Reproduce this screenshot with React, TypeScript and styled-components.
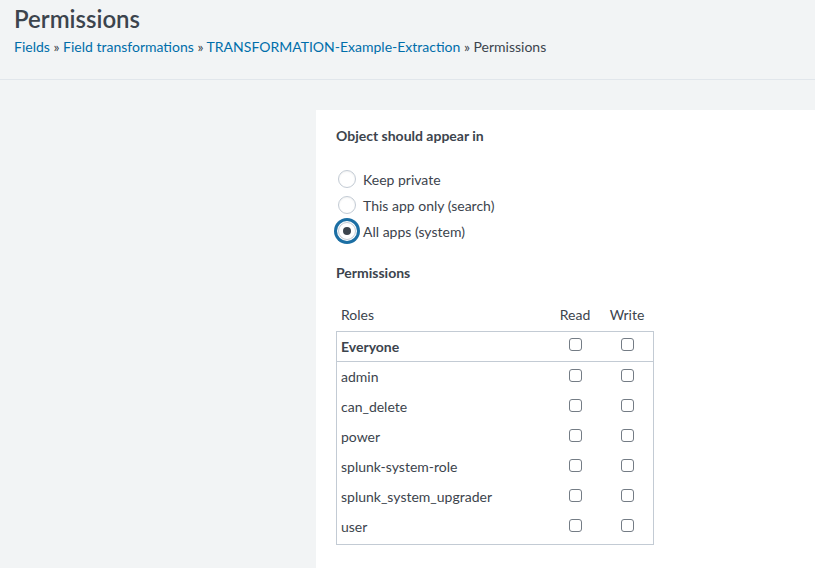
import React from 'react';
import styled, { createGlobalStyle } from 'styled-components';

const GlobalStyle = createGlobalStyle`
  html, body {
    margin: 0;
    padding: 0;
    background: #f2f4f5;
    font-family: Lato, 'Open Sans', sans-serif;
    color: #3c444d;
  }
`;

const Page = styled.div`
  min-height: 568px;
  display: flex;
  flex-direction: column;
`;

const PageHeader = styled.header`
  height: 80px;
  box-sizing: border-box;
  padding: 3px 14px 0;
  border-bottom: 1px solid #e1e6eb;
`;

const Title = styled.h1`
  margin: 0;
  font-size: 24px;
  font-weight: 600;
  line-height: 32px;
  color: #3c444d;
`;

const Crumbs = styled.div`
  font-size: 14px;
  line-height: 20px;
  margin-top: 2px;
  color: #3c444d;
`;

const CrumbLink = styled.a`
  color: #006eaa;
  text-decoration: none;
`;

const Body = styled.main`
  flex: 1;
  display: grid;
  grid-template-columns: 316px 1fr;
  padding-top: 30px;
`;

const Panel = styled.section`
  grid-column: 2;
  background: #fff;
  padding: 16px 20px 20px;
`;

const SectionTitle = styled.h2`
  margin: 0;
  font-size: 14px;
  font-weight: 700;
  line-height: 20px;
`;

const RadioList = styled.div`
  display: flex;
  flex-direction: column;
  gap: 6px;
  margin: 23px 0 22px;
`;

const RadioRow = styled.label`
  display: flex;
  align-items: center;
  gap: 7px;
  font-size: 14px;
  height: 20px;
  padding-left: 2px;
`;

const RadioCircle = styled.span<{ $checked?: boolean }>`
  width: 18px;
  height: 18px;
  box-sizing: border-box;
  border-radius: 50%;
  border: 1px solid #c3cbd4;
  background: #fff;
  display: flex;
  align-items: center;
  justify-content: center;
  box-shadow: ${(p) => (p.$checked ? '0 0 0 1px #fff, 0 0 0 4px #1b6ea3' : 'inset 0 1px 2px rgba(0,0,0,0.06)')};

  &::after {
    content: '';
    display: ${(p) => (p.$checked ? 'block' : 'none')};
    width: 8px;
    height: 8px;
    border-radius: 50%;
    background: #3c444d;
  }
`;

const Table = styled.div`
  width: 318px;
  margin-top: 16px;
`;

const Grid = styled.div`
  display: grid;
  grid-template-columns: 1fr 52px 52px;
  align-items: center;
  box-sizing: border-box;
`;

const HeadRow = styled(Grid)`
  height: 32px;
  padding: 0 1px 1px 5px;
  font-size: 14px;
`;

const HeadCell = styled.span<{ $center?: boolean }>`
  text-align: ${(p) => (p.$center ? 'center' : 'left')};
`;

const Box = styled.div`
  border: 1px solid #c3cbd4;
  padding-bottom: 2px;
`;

const RoleRow = styled(Grid)<{ $first?: boolean }>`
  height: 30px;
  padding: 0 0 1px 4px;
  font-size: 14px;
  font-weight: ${(p) => (p.$first ? 700 : 400)};
  border-bottom: ${(p) => (p.$first ? '1px solid #c3cbd4' : 'none')};
`;

const Check = styled.span`
  justify-self: center;
  width: 13px;
  height: 13px;
  box-sizing: border-box;
  border: 1px solid #747c85;
  border-radius: 3px;
  background: #fff;
  margin-top: -3px;
`;

const roles = [
  'admin',
  'can_delete',
  'power',
  'splunk-system-role',
  'splunk_system_upgrader',
  'user',
];

const radios = [
  { label: 'Keep private', checked: false },
  { label: 'This app only (search)', checked: false },
  { label: 'All apps (system)', checked: true },
];

export default function App() {
  return (
    <Page>
      <GlobalStyle />
      <PageHeader>
        <Title>Permissions</Title>
        <Crumbs>
          <CrumbLink href="#">Fields</CrumbLink> »{' '}
          <CrumbLink href="#">Field transformations</CrumbLink> »{' '}
          <CrumbLink href="#">TRANSFORMATION-Example-Extraction</CrumbLink> »{' '}
          Permissions
        </Crumbs>
      </PageHeader>
      <Body>
        <Panel>
          <SectionTitle>Object should appear in</SectionTitle>
          <RadioList>
            {radios.map((r) => (
              <RadioRow key={r.label}>
                <RadioCircle $checked={r.checked} />
                {r.label}
              </RadioRow>
            ))}
          </RadioList>
          <SectionTitle>Permissions</SectionTitle>
          <Table>
            <HeadRow>
              <HeadCell>Roles</HeadCell>
              <HeadCell $center>Read</HeadCell>
              <HeadCell $center>Write</HeadCell>
            </HeadRow>
            <Box>
              <RoleRow $first>
                <span>Everyone</span>
                <Check />
                <Check />
              </RoleRow>
              {roles.map((role) => (
                <RoleRow key={role}>
                  <span>{role}</span>
                  <Check />
                  <Check />
                </RoleRow>
              ))}
            </Box>
          </Table>
        </Panel>
      </Body>
    </Page>
  );
}
